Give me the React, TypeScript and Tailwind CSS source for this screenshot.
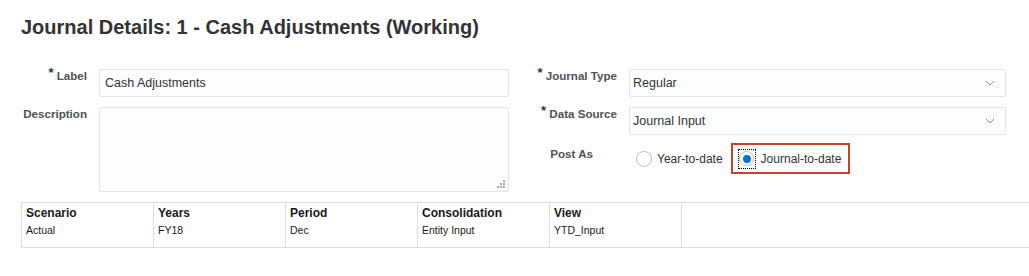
import React from "react";

const Req = () => (
  <span className="relative top-[-3px] text-[13px] font-bold text-[#333]">*</span>
);

const Chevron = () => (
  <svg width="10" height="6" viewBox="0 0 10 6" className="shrink-0">
    <polyline points="1,1 5,5 9,1" fill="none" stroke="#8c9196" strokeWidth="1" />
  </svg>
);

const Grip = () => (
  <svg width="9" height="9" viewBox="0 0 9 9" className="absolute right-[3px] bottom-[3px]">
    <rect x="7" y="1" width="2" height="2" fill="#a3a8ad" />
    <rect x="4" y="4" width="2" height="2" fill="#a3a8ad" />
    <rect x="7" y="4" width="2" height="2" fill="#a3a8ad" />
    <rect x="1" y="7" width="2" height="2" fill="#a3a8ad" />
    <rect x="4" y="7" width="2" height="2" fill="#a3a8ad" />
    <rect x="7" y="7" width="2" height="2" fill="#a3a8ad" />
  </svg>
);

const cells = [
  { h: "Scenario", v: "Actual" },
  { h: "Years", v: "FY18" },
  { h: "Period", v: "Dec" },
  { h: "Consolidation", v: "Entity Input" },
  { h: "View", v: "YTD_Input" },
];

export default function App() {
  return (
    <div className="w-[1029px] h-[276px] bg-white overflow-hidden font-['Liberation_Sans',Arial,sans-serif] flex flex-col">
      <h1 className="pt-[15px] pl-[21px] text-[20px] leading-[24px] font-bold text-[#333333]">
        Journal Details: 1 - Cash Adjustments (Working)
      </h1>

      <div className="mt-[30px] flex">
        {/* left column */}
        <div className="w-[509px] flex flex-col gap-[10px]">
          <div className="flex gap-[12px]">
            <div className="w-[87px] text-right text-[11.6px] leading-[14px] font-bold text-[#4f5256]">
              <Req />&nbsp;Label
            </div>
            <div className="w-[410px] h-[28px] border border-[#dfe4e9] rounded-[2px] bg-[#fcfdfe] flex items-center pl-[5px] text-[12.5px] text-[#333]">
              Cash Adjustments
            </div>
          </div>
          <div className="flex gap-[12px]">
            <div className="w-[87px] text-right text-[11.6px] leading-[14px] font-bold text-[#4f5256]">
              Description
            </div>
            <div className="relative w-[410px] h-[85px] border border-[#dfe4e9] rounded-[2px] bg-[#fcfdfe]">
              <Grip />
            </div>
          </div>
        </div>

        {/* right column */}
        <div className="w-[497px] flex flex-col">
          <div className="flex gap-[12px]">
            <div className="w-[108px] text-right text-[11.6px] leading-[14px] font-bold text-[#4f5256]">
              <Req />&nbsp;Journal Type
            </div>
            <div className="w-[377px] h-[28px] border border-[#dfe4e9] rounded-[2px] bg-[#fcfdfe] flex items-center justify-between pl-[3px] pr-[10px] text-[12.5px] text-[#333]">
              <span>Regular</span>
              <Chevron />
            </div>
          </div>
          <div className="mt-[10px] flex gap-[12px]">
            <div className="w-[108px] text-right text-[11.6px] leading-[14px] font-bold text-[#4f5256]">
              <Req />&nbsp;Data Source
            </div>
            <div className="w-[377px] h-[28px] border border-[#dfe4e9] rounded-[2px] bg-[#fcfdfe] flex items-center justify-between pl-[3px] pr-[10px] text-[12.5px] text-[#333]">
              <span>Journal Input</span>
              <Chevron />
            </div>
          </div>
          <div className="mt-[8px] flex gap-[12px]">
            <div className="w-[108px] text-right pr-[24px] pt-[4px] text-[11.6px] leading-[14px] font-bold text-[#4f5256]">
              Post As
            </div>
            <div className="flex items-center pl-[7px] h-[31px] text-[12px] text-[#333]">
              <span className="w-[16px] h-[16px] rounded-full border border-[#b9bfc5] bg-white"></span>
              <span className="ml-[5px]">Year-to-date</span>
              <div className="ml-[8px] h-[31px] border-2 border-[#c4432f] flex items-center pl-[5px] pr-[7px]">
                <span className="w-[18px] h-[20px] border border-dotted border-black flex items-center justify-center">
                  <span className="w-[15px] h-[15px] rounded-full border border-[#b9bfc5] bg-white flex items-center justify-center">
                    <span className="w-[8px] h-[8px] rounded-full bg-[#0572ce]"></span>
                  </span>
                </span>
                <span className="ml-[5px]">Journal-to-date</span>
              </div>
            </div>
          </div>
        </div>
      </div>

      <div className="mt-[10px] ml-[21px] h-[46px] flex border-y border-[#d6dfe6]">
        {cells.map((c) => (
          <div key={c.h} className="w-[132px] border-l border-[#d6dfe6] pl-[4px] pt-[3px]">
            <div className="text-[12px] leading-[14px] font-bold text-[#1a1a1a]">{c.h}</div>
            <div className="mt-[4px] text-[10.5px] leading-[13px] text-[#1a1a1a]">{c.v}</div>
          </div>
        ))}
        <div className="flex-1 border-l border-[#d6dfe6]"></div>
      </div>
    </div>
  );
}
